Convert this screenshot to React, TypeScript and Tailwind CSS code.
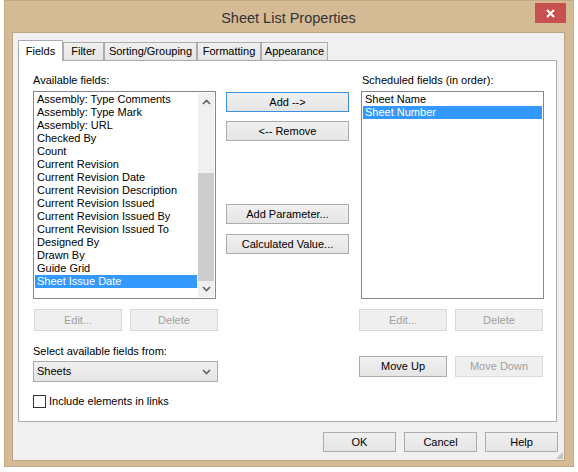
import React from "react";

const availableFields = [
  "Assembly: Type Comments",
  "Assembly: Type Mark",
  "Assembly: URL",
  "Checked By",
  "Count",
  "Current Revision",
  "Current Revision Date",
  "Current Revision Description",
  "Current Revision Issued",
  "Current Revision Issued By",
  "Current Revision Issued To",
  "Designed By",
  "Drawn By",
  "Guide Grid",
  "Sheet Issue Date",
];

const scheduledFields = ["Sheet Name", "Sheet Number"];

const tabs = [
  { label: "Fields", w: "w-[45px]" },
  { label: "Filter", w: "w-[41px]" },
  { label: "Sorting/Grouping", w: "w-[93px]" },
  { label: "Formatting", w: "w-[64px]" },
  { label: "Appearance", w: "w-[67px]" },
];

const enabledBtn =
  "border border-[#acacac] bg-linear-to-b from-[#f0f0f0] to-[#e5e5e5] text-black";
const disabledBtn = "border border-[#d9d9d9] bg-[#efefef] text-[#a0a0a0]";
const defaultBtn =
  "border border-[#3c8fe0] bg-linear-to-b from-[#f0f0f0] to-[#e5e5e5] text-black";

function Chevron({ up }: { up?: boolean }) {
  return (
    <svg width="9" height="6" viewBox="0 0 9 6">
      <path
        d={up ? "M1 5 L4.5 1.5 L8 5" : "M1 1 L4.5 4.5 L8 1"}
        fill="none"
        stroke="#606060"
        strokeWidth="1.6"
      />
    </svg>
  );
}

function ResizeGrip() {
  return (
    <svg width="7" height="7" viewBox="0 0 7 7" className="absolute right-[1px] bottom-[1px]">
      <rect x="5" y="1" width="2" height="2" fill="#c2c2c2" />
      <rect x="3" y="3" width="2" height="2" fill="#c2c2c2" />
      <rect x="5" y="3" width="2" height="2" fill="#c2c2c2" />
      <rect x="1" y="5" width="2" height="2" fill="#c2c2c2" />
      <rect x="3" y="5" width="2" height="2" fill="#c2c2c2" />
      <rect x="5" y="5" width="2" height="2" fill="#c2c2c2" />
    </svg>
  );
}

export default function App() {
  return (
    <div
      className="w-[578px] h-[472px] bg-white overflow-hidden text-[11px] text-black"
      style={{ fontFamily: '"Liberation Sans", Arial, sans-serif' }}
    >
      {/* window frame */}
      <div className="ml-[4px] w-[570px] h-[467px] bg-[#d4bb96] border border-[#c4a982] pl-[7px] pr-[8px] pb-[5px] flex flex-col">
        {/* title bar */}
        <div className="relative h-[31px] shrink-0 flex items-center justify-center pt-[4px]">
          <span className="text-[14.5px] text-[#333333]">Sheet List Properties</span>
          <div className="absolute right-[-1px] top-[2px] w-[31px] h-[20px] bg-[#c75050] flex items-center justify-center">
            <svg width="9" height="9" viewBox="0 0 9 9">
              <path d="M1 1 L8 8 M8 1 L1 8" stroke="white" strokeWidth="2" />
            </svg>
          </div>
        </div>

        {/* client area */}
        <div className="relative w-[553px] h-[429px] bg-[#f0f0f0] border border-[#bba47f] flex flex-col">
          {/* tab strip */}
          <div className="ml-[5px] mt-[7px] h-[20px] flex items-end relative z-10">
            {tabs.map((t, i) =>
              i === 0 ? (
                <div
                  key={t.label}
                  className={`${t.w} h-[21px] -mb-[1px] bg-white border-x border-t border-[#acacac] flex items-center justify-center`}
                >
                  {t.label}
                </div>
              ) : (
                <div
                  key={t.label}
                  className={`${t.w} h-[18px] bg-linear-to-b from-[#f0f0f0] to-[#e5e5e5] border-x border-t border-[#acacac] flex items-center justify-center`}
                >
                  {t.label}
                </div>
              )
            )}
          </div>

          {/* tab panel */}
          <div className="ml-[5px] w-[539px] h-[362px] bg-white border border-[#acacac] flex">
            {/* left column */}
            <div className="ml-[14px] w-[185px] flex flex-col pt-[13px]">
              <div className="h-[13px] leading-[13px]">Available fields:</div>
              <div className="mt-[4px] w-[183px] h-[208px] border border-[#828790] flex">
                <div className="w-[164px] px-[1px] pt-[1px] flex flex-col">
                  {availableFields.map((f, i) => (
                    <div
                      key={f}
                      className={`h-[13px] leading-[13px] pl-[2px] whitespace-nowrap ${
                        i === availableFields.length - 1 ? "bg-[#3399ff] text-white" : ""
                      }`}
                    >
                      {f}
                    </div>
                  ))}
                </div>
                <div className="w-[16px] my-[1px] bg-[#f0f0f0] flex flex-col">
                  <div className="h-[17px] flex items-center justify-center">
                    <Chevron up />
                  </div>
                  <div className="flex-1 flex flex-col">
                    <div className="mt-auto h-[108px] bg-[#cdcdcd]" />
                  </div>
                  <div className="h-[16px] flex items-center justify-center">
                    <Chevron />
                  </div>
                </div>
              </div>
              <div className="mt-[10px] flex gap-[8px] pl-[1px]">
                <div className={`w-[88px] h-[22px] flex items-center justify-center ${disabledBtn}`}>Edit...</div>
                <div className={`w-[88px] h-[22px] flex items-center justify-center ${disabledBtn}`}>Delete</div>
              </div>
              <div className="mt-[14px] h-[13px] leading-[13px]">Select available fields from:</div>
              <div
                className={`mt-[3px] w-[185px] h-[21px] flex items-center justify-between pl-[3px] pr-[6px] ${enabledBtn}`}
              >
                <span>Sheets</span>
                <Chevron />
              </div>
              <div className="mt-[13px] flex items-center gap-[3px]">
                <div className="w-[13px] h-[13px] border border-[#333333] bg-white" />
                <span className="leading-[13px]">Include elements in links</span>
              </div>
            </div>

            {/* middle column */}
            <div className="ml-[8px] w-[123px] flex flex-col pt-[31px]">
              <div className={`h-[20px] flex items-center justify-center ${defaultBtn}`}>Add --&gt;</div>
              <div className={`mt-[9px] h-[20px] flex items-center justify-center ${enabledBtn}`}>&lt;-- Remove</div>
              <div className={`mt-[63px] h-[20px] flex items-center justify-center ${enabledBtn}`}>Add Parameter...</div>
              <div className={`mt-[10px] h-[20px] flex items-center justify-center ${enabledBtn}`}>Calculated Value...</div>
            </div>

            {/* right column */}
            <div className="ml-[10px] w-[185px] flex flex-col pt-[13px]">
              <div className="h-[13px] leading-[13px] pl-[3px]">Scheduled fields (in order):</div>
              <div className="mt-[4px] ml-[2px] w-[183px] h-[208px] border border-[#828790] px-[1px] pt-[1px] flex flex-col">
                {scheduledFields.map((f, i) => (
                  <div
                    key={f}
                    className={`h-[13px] leading-[13px] pl-[2px] ${i === 1 ? "bg-[#3399ff] text-white" : ""}`}
                  >
                    {f}
                  </div>
                ))}
              </div>
              <div className="mt-[10px] flex gap-[8px]">
                <div className={`w-[88px] h-[22px] flex items-center justify-center ${disabledBtn}`}>Edit...</div>
                <div className={`w-[88px] h-[22px] flex items-center justify-center ${disabledBtn}`}>Delete</div>
              </div>
              <div className="mt-[25px] flex gap-[8px]">
                <div className={`w-[88px] h-[21px] flex items-center justify-center ${enabledBtn}`}>Move Up</div>
                <div className={`w-[88px] h-[21px] flex items-center justify-center ${disabledBtn}`}>Move Down</div>
              </div>
            </div>
          </div>

          {/* dialog buttons */}
          <div className="mt-[10px] flex justify-end gap-[8px] pr-[6px]">
            <div className={`w-[73px] h-[20px] flex items-center justify-center ${enabledBtn}`}>OK</div>
            <div className={`w-[73px] h-[20px] flex items-center justify-center ${enabledBtn}`}>Cancel</div>
            <div className={`w-[73px] h-[20px] flex items-center justify-center ${enabledBtn}`}>Help</div>
          </div>
          <ResizeGrip />
        </div>
      </div>
    </div>
  );
}
